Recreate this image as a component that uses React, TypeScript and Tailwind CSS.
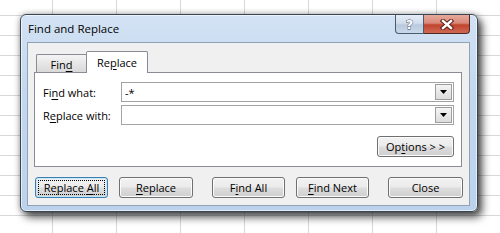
import React from "react";

function U({ children }: { children: React.ReactNode }) {
  return <span className="underline decoration-1 underline-offset-[2px]">{children}</span>;
}

function Btn({
  w,
  children,
  focused,
}: {
  w: string;
  children: React.ReactNode;
  focused?: boolean;
}) {
  return (
    <div
      className={
        (focused
          ? "border-[#3c7fb1] shadow-[inset_0_0_0_1px_#c4e6f8] "
          : "border-[#707070] shadow-[inset_0_0_0_1px_#fbfbfb] ") +
        w +
        " h-[21px] shrink-0 rounded-[3px] border bg-[linear-gradient(to_bottom,#f2f2f2_0%,#ebebeb_48%,#dddddd_52%,#cfcfcf_100%)] flex items-stretch text-[11px] leading-none text-black"
      }
    >
      {focused ? (
        <div className="flex-1 m-[2px] border border-dotted border-black flex items-center justify-center">
          {children}
        </div>
      ) : (
        <div className="flex-1 flex items-center justify-center">{children}</div>
      )}
    </div>
  );
}

function Combo({ value }: { value?: string }) {
  return (
    <div className="h-[20px] w-[333px] border border-[#a3a3a3] bg-white flex items-stretch">
      <div className="flex-1 pl-[3px] flex items-center text-[11px] leading-none text-black">{value}</div>
      <div className="w-[17px] m-px border border-[#9d9d9d] bg-[linear-gradient(to_bottom,#f5f5f5,#dcdcdc)] flex items-center justify-center">
        <svg width="7" height="4" viewBox="0 0 7 4">
          <path d="M0 0 H7 L3.5 4 Z" fill="#000" />
        </svg>
      </div>
    </div>
  );
}

export default function App() {
  return (
    <div className="w-[500px] h-[233px] overflow-hidden bg-white bg-[linear-gradient(to_right,#d6d8da_1px,transparent_1px),linear-gradient(to_bottom,#d6d8da_1px,transparent_1px)] [background-size:64px_20px] [background-position:52px_15px] pt-[14px] pl-[20px] font-['Open_Sans',sans-serif]">
      <div className="w-[458px] h-[198px] rounded-[6px] border border-[#3a4553] bg-[linear-gradient(to_bottom,#d3e2f4,#c3d7ee_40%,#bcd2ec)] shadow-[inset_0_0_0_1px_rgba(255,255,255,0.6),4px_5px_8px_rgba(0,0,0,0.7),0_0_6px_rgba(0,0,0,0.3)] flex flex-col">
        {/* Title bar */}
        <div className="h-[27px] flex items-start">
          <div className="self-center pl-[7px] text-[11.5px] leading-none text-black">Find and Replace</div>
          <div className="ml-auto mr-[7px] flex">
            <div className="w-[29px] h-[19px] border border-t-0 border-[#4b5a6c] rounded-bl-[4px] bg-[linear-gradient(to_bottom,#e3ecf7_0%,#d2deec_45%,#b9cade_55%,#c9d8ea_100%)] flex items-center justify-center">
              <span className="text-[13px] leading-none font-bold text-white [-webkit-text-stroke:0.8px_#3d4a5a] [paint-order:stroke_fill] font-['DejaVu_Sans',sans-serif]">?</span>
            </div>
            <div className="w-[46px] h-[19px] border border-t-0 border-l-0 border-[#4b2a26] rounded-br-[4px] bg-[linear-gradient(to_bottom,#e6a999_0%,#d8897a_45%,#c2432e_55%,#cf6a55_100%)] flex items-center justify-center">
              <svg width="14" height="11" viewBox="0 0 14 11">
                <path d="M3 2 L11 9 M11 2 L3 9" stroke="#5a1e17" strokeWidth="4.4" strokeLinecap="square" />
                <path d="M3 2 L11 9 M11 2 L3 9" stroke="#ffffff" strokeWidth="2.4" strokeLinecap="square" />
              </svg>
            </div>
          </div>
        </div>
        {/* Client */}
        <div className="ml-[6px] mr-[7px] h-[164px] border border-[#8fa2b8] bg-[#f0f0f0] flex flex-col text-black">
          <div className="pt-[8px] flex flex-col">
            {/* tab strip */}
            <div className="h-[21px] pl-[8px] flex items-end relative z-10">
              <div className="w-[50px] h-[18px] border border-r-0 border-b-0 border-[#898c95] rounded-tl-[2px] bg-[linear-gradient(to_bottom,#f4f4f4,#e6e6e6_50%,#d9d9d9)] flex items-center justify-center text-[11px] leading-none pt-[1px]">
                <span>
                  Fin<U>d</U>
                </span>
              </div>
              <div className="w-[62px] h-[22px] -mb-px border border-b-0 border-[#898c95] rounded-t-[2px] bg-white flex items-center justify-center text-[11px] leading-none pb-[1px]">
                <span>
                  Re<U>p</U>lace
                </span>
              </div>
            </div>
            {/* panel */}
            <div className="ml-[6px] mr-[7px] h-[95px] border border-[#898c95] bg-white flex flex-col">
              <div className="mt-[9px] flex items-center">
                <div className="w-[86px] pl-[8px] text-[11px] leading-none">
                  Fi<U>n</U>d what:
                </div>
                <Combo value="-*" />
              </div>
              <div className="mt-[3px] flex items-center">
                <div className="w-[86px] pl-[8px] text-[11px] leading-none">
                  R<U>e</U>place with:
                </div>
                <Combo />
              </div>
              <div className="mt-[11px] mr-[7px] flex justify-end">
                <Btn w="w-[77px]">
                  <span>
                    Op<U>t</U>ions &gt; &gt;
                  </span>
                </Btn>
              </div>
            </div>
            {/* bottom buttons */}
            <div className="mt-[10px] pl-[7px] flex">
              <Btn w="w-[73px]" focused>
                <span>
                  Replace <U>A</U>ll
                </span>
              </Btn>
              <div className="w-[11px]" />
              <Btn w="w-[74px]">
                <span>
                  <U>R</U>eplace
                </span>
              </Btn>
              <div className="w-[19px]" />
              <Btn w="w-[73px]">
                <span>
                  F<U>i</U>nd All
                </span>
              </Btn>
              <div className="w-[11px]" />
              <Btn w="w-[73px]">
                <span>
                  <U>F</U>ind Next
                </span>
              </Btn>
              <div className="w-[19px]" />
              <Btn w="w-[75px]">
                <span>Close</span>
              </Btn>
            </div>
          </div>
        </div>
      </div>
    </div>
  );
}
